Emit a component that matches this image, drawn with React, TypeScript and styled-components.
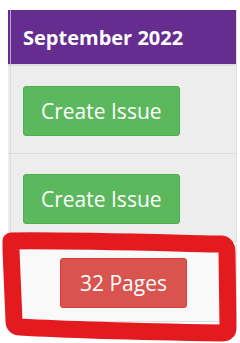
import React from 'react';
import styled, { createGlobalStyle } from 'styled-components';

const GlobalStyle = createGlobalStyle`
    html, body {
        margin: 0;
        padding: 0;
        background: #fff;
        font-family: "Open Sans", "Liberation Sans", sans-serif;
    }
`;

const Page = styled.div`
    position: relative;
    width: 240px;
    height: 343px;
    overflow: hidden;
    padding: 10px 4px 0 8px;
    box-sizing: border-box;
`;

const Table = styled.div`
    display: grid;
    grid-template-columns: 2px 1fr;
    width: 228px;
    border-right: 1px solid #ddd;
`;

const HeadCell = styled.div<{ stub?: boolean }>`
    background: #662d91;
    height: 54px;
    display: flex;
    align-items: center;
    padding-left: ${p => (p.stub ? '0' : '12px')};
    border-left: ${p => (p.stub ? 'none' : '1px solid rgba(255, 255, 255, 0.55)')};
    border-bottom: 2px solid #ddd;
    color: #fff;
    font-weight: 700;
    font-size: 20px;
`;

const Cell = styled.div<{ stub?: boolean; striped?: boolean; center?: boolean; pad?: string }>`
    background: ${p => (p.striped ? '#f9f9f9' : '#ededed')};
    border-left: ${p => (p.stub ? 'none' : '1px solid #ddd')};
    border-bottom: 1px solid #ddd;
    padding: ${p => (p.stub ? '0' : p.pad || '20px 12px 17px')};
    display: flex;
    justify-content: ${p => (p.center ? 'center' : 'flex-start')};
`;

const Button = styled.button<{ variant: 'success' | 'danger' }>`
    font-family: "Open Sans", "Liberation Sans", sans-serif;
    font-size: 21px;
    color: #fff;
    height: 50px;
    padding: 0 ${p => (p.variant === 'success' ? '17px' : '19px')};
    border-radius: 3px;
    border: 1px solid ${p => (p.variant === 'success' ? '#4cae4c' : '#d43f3a')};
    background: ${p => (p.variant === 'success' ? '#5cb85c' : '#d9534f')};
    cursor: pointer;
`;

const Scribble = styled.svg`
    position: absolute;
    left: 0;
    top: 0;
    pointer-events: none;
`;

export default function App(): React.ReactElement {
    return (
        <>
            <GlobalStyle />
            <Page>
                <Table>
                    <HeadCell stub />
                    <HeadCell>September 2022</HeadCell>

                    <Cell stub />
                    <Cell>
                        <Button variant="success">Create Issue</Button>
                    </Cell>

                    <Cell stub />
                    <Cell>
                        <Button variant="success">Create Issue</Button>
                    </Cell>

                    <Cell stub striped />
                    <Cell striped center pad="16px 12px 13px">
                        <Button variant="danger">32 Pages</Button>
                    </Cell>
                </Table>
                {/* hand drawn highlight around the last row */}
                <Scribble width="240" height="343" viewBox="0 0 240 343">
                    <path
                        d="M 11 241 C 60 240, 170 243, 222 244 Q 227 245 227 252 L 228 328 Q 228 333 222 333 C 160 332, 70 330, 20 327 Q 14 327 14 321 L 11 250 Z"
                        fill="none"
                        stroke="#e31b1e"
                        strokeWidth="17"
                        strokeLinejoin="round"
                    />
                </Scribble>
            </Page>
        </>
    );
}
